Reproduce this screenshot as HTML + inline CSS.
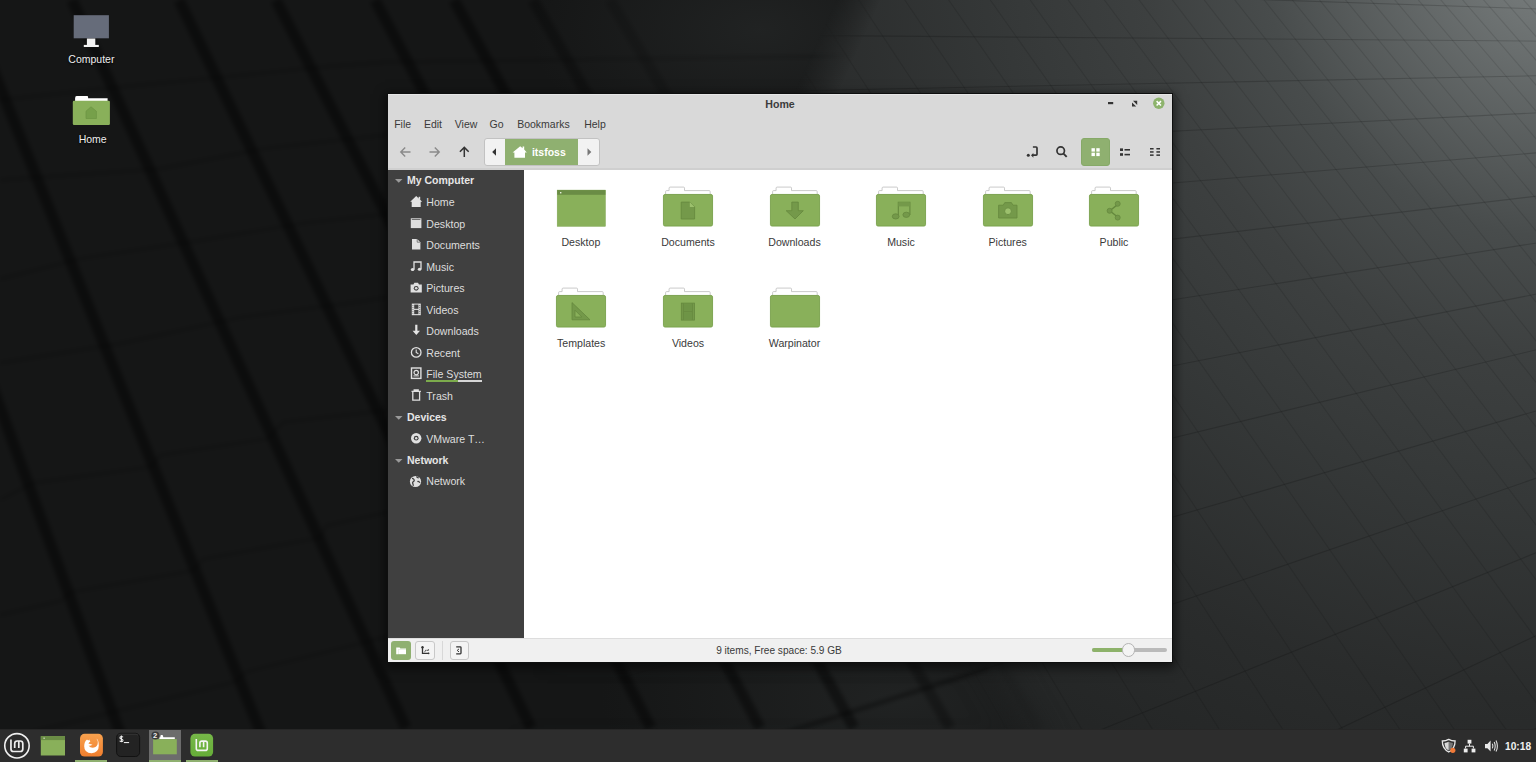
<!DOCTYPE html>
<html><head><meta charset="utf-8">
<style>
*{margin:0;padding:0;box-sizing:border-box}
html,body{width:1536px;height:762px;overflow:hidden;background:#151616;font-family:"Liberation Sans",sans-serif}
.a{position:absolute}
.t{position:absolute;line-height:1;white-space:nowrap}
svg{position:absolute;overflow:visible}
</style></head><body>
<svg style="left:0;top:0" width="1536" height="762" viewBox="0 0 1536 762">
<defs>
 <radialGradient id="litg" gradientUnits="userSpaceOnUse" cx="1560" cy="-60" r="1100">
  <stop offset="0" stop-color="#7c8181"/>
  <stop offset="0.06" stop-color="#737878"/>
  <stop offset="0.27" stop-color="#484c4c"/>
  <stop offset="0.38" stop-color="#3d4040"/>
  <stop offset="0.51" stop-color="#353838"/>
  <stop offset="0.69" stop-color="#2a2c2c"/>
  <stop offset="0.95" stop-color="#1f2121"/>
  <stop offset="1" stop-color="#1e2020"/>
 </radialGradient>
 <linearGradient id="mg" gradientUnits="userSpaceOnUse" x1="818.8" y1="38.7" x2="855.2" y2="55.3">
  <stop offset="0" stop-color="#000"/><stop offset="1" stop-color="#fff"/>
 </linearGradient>
 <filter id="bl" x="-10%" y="-10%" width="120%" height="120%"><feGaussianBlur stdDeviation="2.2"/></filter>
 <radialGradient id="haze"><stop offset="0" stop-color="#222424" stop-opacity="0.9"/><stop offset="1" stop-color="#222424" stop-opacity="0"/></radialGradient>
 <mask id="litm" maskUnits="userSpaceOnUse" x="0" y="0" width="1536" height="762">
  <rect width="1536" height="762" fill="url(#mg)"/>
  <path d="M0 640H980L1050 762H0Z" fill="#000" filter="url(#bl2)"/>
 </mask>
 <filter id="bl2" x="-20%" y="-20%" width="140%" height="140%"><feGaussianBlur stdDeviation="18"/></filter>
</defs>
<rect width="1536" height="762" fill="#151616"/>
<ellipse cx="760" cy="30" rx="230" ry="130" fill="url(#haze)"/>
<ellipse cx="900" cy="700" rx="300" ry="120" fill="url(#haze)"/>
<g filter="url(#bl)" stroke="#000" fill="none" stroke-linecap="butt">
 <g stroke-width="11" stroke-opacity="0.42">
  <path d="M-150 0L130.7 762"/>
  <path d="M-35 0L272.6 762"/>
  <path d="M72 0L406 728"/>
  <path d="M179 0L531 728"/>
  <path d="M276 0L650.8 728"/>
  <path d="M375 0L760 728"/>
  <path d="M454 0L854 728"/>
  <path d="M533 0L950 728" stroke-opacity="0.28"/>
  <path d="M610 0L1040 728" stroke-opacity="0.16"/>
 </g>
 <g stroke-width="4" stroke-opacity="0.4">
  <path d="M700 760L989 668"/>
  <path d="M1000 760L1180 701.7L1241 673.6"/>
  <path d="M1172 516.1L1241.4 498.1"/>
  <path d="M1172 604L1241.4 580.8"/>
 </g>
 <g stroke-width="1.3" stroke="#050606" stroke-opacity="0.4">
  <path d="M0 100L120 87L225 76.8L327.5 66.5L388 62L860 56"/>
  <path d="M0 180L158.6 169L266 148.4L358 138L388 135"/>
  <path d="M0 279L81.9 258.4L199.6 240.5L307 222.6L388 214"/>
  <path d="M0 363L123 343L240.5 317.3L358 302L388 297"/>
  <path d="M0 500L33 483L151 467L160.5 455L269 438.5L283 422L390 410"/>
  <path d="M0 615L61 601L70.8 592L193.6 570.7L203 559L321 537.6L325.8 525.8L390 511.6"/>
  <path d="M0 740L113 712L236 681.6L245.5 672L358.8 643.8L390 636"/>
 </g>
</g>
<rect width="1536" height="762" fill="url(#litg)" mask="url(#litm)"/>
<g mask="url(#litm)" stroke="#000" stroke-width="1.1" fill="none"><g stroke-opacity="0.17"><path d="M333.9 -199.5L1798.3 -49.2"/><path d="M-179.1 -188.8L1798.2 -28.3"/><path d="M-182.7 -121.5L1798.2 -6.0"/><path d="M-186.6 -49.4L1798.1 17.7"/><path d="M-190.7 27.8L1798.1 43.1"/><path d="M-195.2 110.9L1798.0 70.4"/><path d="M-199.9 200.4L1797.9 99.7"/><path d="M-172.2 294.5L1797.8 131.2"/><path d="M-176.4 398.1L1797.7 165.4"/><path d="M-180.9 510.9L1797.6 202.3"/><path d="M-185.8 633.9L1797.5 242.6"/><path d="M-191.3 768.7L1797.4 286.5"/><path d="M-197.2 917.0L1797.3 334.7"/><path d="M35.4 998.1L1797.2 387.8"/><path d="M463.6 988.9L1797.0 446.6"/><path d="M784.5 991.6L1796.9 512.0"/><path d="M1052.0 993.9L1796.7 585.2"/><path d="M1278.5 995.8L1796.5 667.7"/><path d="M1472.7 997.5L1796.2 761.4"/></g><g stroke-opacity="0.11"><path d="M-197.2 917.0L-179.5 990.2"/><path d="M-199.5 316.9L-5.8 996.6"/><path d="M-198.7 -86.7L150.0 988.7"/><path d="M-131.7 -197.7L298.2 994.7"/><path d="M-35.6 -195.6L430.8 987.5"/><path d="M51.3 -199.8L558.7 993.1"/><path d="M134.7 -197.8L678.2 998.3"/><path d="M212.6 -195.9L784.5 991.6"/><path d="M282.8 -199.6L889.3 996.6"/><path d="M351.3 -197.8L982.0 990.4"/><path d="M415.7 -196.0L1074.7 995.0"/><path d="M473.6 -199.4L1162.1 999.4"/><path d="M530.9 -197.8L1238.9 993.7"/><path d="M585.1 -196.2L1317.1 997.9"/><path d="M633.6 -199.3L1385.3 992.5"/><path d="M682.3 -197.8L1455.7 996.5"/><path d="M728.5 -196.3L1516.7 991.5"/><path d="M769.6 -199.2L1580.3 995.3"/><path d="M811.6 -197.8L1641.0 998.9"/><path d="M851.5 -196.4L1693.1 994.2"/><path d="M886.8 -199.1L1748.5 997.6"/><path d="M923.3 -197.8L1795.6 993.1"/><path d="M958.1 -196.5L1795.8 928.6"/><path d="M988.7 -199.0L1795.9 868.8"/><path d="M1020.7 -197.8L1796.1 813.3"/><path d="M1051.4 -196.6L1796.2 761.4"/><path d="M1078.2 -198.9L1796.3 713.0"/><path d="M1106.5 -197.8L1796.5 667.7"/><path d="M1133.8 -196.7L1796.6 625.2"/><path d="M1157.4 -198.9L1796.7 585.2"/><path d="M1182.6 -197.8L1796.8 547.5"/><path d="M1204.4 -199.9L1796.9 512.0"/><path d="M1230.5 -195.7L1796.9 478.4"/><path d="M1255.8 -191.7L1797.0 446.6"/><path d="M1280.3 -187.7L1797.1 416.4"/><path d="M1304.0 -184.0L1797.2 387.8"/><path d="M1326.9 -180.3L1797.2 360.6"/><path d="M1349.2 -176.7L1797.3 334.7"/><path d="M1370.7 -173.3L1797.4 310.1"/><path d="M1391.6 -169.9L1797.4 286.5"/><path d="M1411.9 -166.7L1797.5 264.1"/><path d="M1431.7 -163.5L1797.5 242.6"/><path d="M1450.8 -160.5L1797.6 222.0"/><path d="M1469.4 -157.5L1797.6 202.3"/><path d="M1487.5 -154.6L1797.7 183.5"/><path d="M1505.1 -151.8L1797.7 165.4"/><path d="M1522.2 -149.0L1797.8 148.0"/><path d="M1538.9 -146.4L1797.8 131.2"/><path d="M1555.1 -143.8L1797.9 115.2"/><path d="M1570.9 -141.2L1797.9 99.7"/><path d="M1586.3 -138.8L1797.9 84.8"/><path d="M1601.3 -136.4L1798.0 70.4"/><path d="M1616.0 -134.0L1798.0 56.5"/><path d="M1630.2 -131.8L1798.1 43.1"/><path d="M1644.2 -129.5L1798.1 30.2"/><path d="M1657.7 -127.4L1798.1 17.7"/><path d="M1671.0 -125.2L1798.1 5.7"/><path d="M1683.9 -123.2L1798.2 -6.0"/><path d="M1696.6 -121.1L1798.2 -17.3"/></g></g>
</svg>
<svg style="left:73px;top:15px" width="36" height="33" viewBox="0 0 36 33">
 <rect x="0.7" y="0.2" width="35.2" height="23.1" fill="#666c7a"/>
 <rect x="13.9" y="23.5" width="8.4" height="6.5" fill="#f2f2f2"/>
 <rect x="10.8" y="29.9" width="15" height="2.1" fill="#f2f2f2"/>
</svg>
<div class="t" style="left:-8.60px;top:53.81px;width:200px;text-align:center;font-size:10.5px;color:#eeeeee;text-shadow:0 1px 2px #000;">Computer</div>
<svg style="left:72px;top:95px" width="38" height="31" viewBox="0 0 38 31">
 <path d="M3.1 6V3.2Q3.1 1.2 4.6 1.1H15.2Q16.1 1.1 16.1 2.3V3.3H35.6V6Z" fill="#ffffff"/>
 <rect x="0.8" y="5.8" width="37.1" height="24.2" rx="1.2" fill="#89b05a"/>
 <path d="M14 23.5V16.2L19 11.8 24.4 16.2V23.5Z" fill="#76a04a" stroke="#6c9442" stroke-width="0.7"/>
</svg>
<div class="t" style="left:-7.30px;top:133.81px;width:200px;text-align:center;font-size:10.5px;color:#eeeeee;text-shadow:0 1px 2px #000;">Home</div>
<div class="a" style="left:387px;top:93px;width:786px;height:570px;box-shadow:0 3px 10px 2px rgba(0,0,0,.55);background:#0e0f0f"></div>
<div class="a" style="left:388px;top:94px;width:784px;height:76px;background:#d9d9d9;border-top:1px solid #e6e6e6"></div>
<div class="a" style="left:388px;top:168px;width:784px;height:2px;background:#cfcfcf"></div>
<div class="a" style="left:388px;top:170px;width:136px;height:468px;background:#404040"></div>
<div class="a" style="left:524px;top:170px;width:648px;height:468px;background:#ffffff"></div>
<div class="a" style="left:388px;top:638px;width:784px;height:24px;background:#f0f0f0;border-top:1px solid #dddddd"></div>
<div class="t" style="left:680.00px;top:98.93px;width:200px;text-align:center;font-size:10.6px;color:#3c3c3c;font-weight:bold;">Home</div>
<svg style="left:1100px;top:95px" width="72" height="18" viewBox="0 0 72 18">
 <rect x="8" y="7" width="5.2" height="2.2" fill="#333"/>
 <path d="M33 5.8H37.2V10Z M32 7.4V11.6H36.2Z" fill="#333"/>
 <circle cx="58.8" cy="8.3" r="5.7" fill="#8db36c"/>
 <path d="M56.6 6.1l4.4 4.4M61 6.1l-4.4 4.4" stroke="#fff" stroke-width="1.5"/>
</svg>
<div class="t " style="left:394.20px;top:119.01px;font-size:10.5px;color:#3a3a3a;">File</div>
<div class="t " style="left:423.90px;top:119.01px;font-size:10.5px;color:#3a3a3a;">Edit</div>
<div class="t " style="left:454.80px;top:119.01px;font-size:10.5px;color:#3a3a3a;">View</div>
<div class="t " style="left:489.60px;top:119.01px;font-size:10.5px;color:#3a3a3a;">Go</div>
<div class="t " style="left:517.20px;top:119.01px;font-size:10.5px;color:#3a3a3a;">Bookmarks</div>
<div class="t " style="left:584.20px;top:119.01px;font-size:10.5px;color:#3a3a3a;">Help</div>
<svg style="left:398px;top:145px" width="76" height="14" viewBox="0 0 76 14">
 <path d="M3 7h9.5M7.2 2.6L2.8 7l4.4 4.4" fill="none" stroke="#8a8a8a" stroke-width="1.4"/>
 <path d="M31.5 7h9.5M36.8 2.6L41.2 7l-4.4 4.4" fill="none" stroke="#8a8a8a" stroke-width="1.4"/>
 <path d="M66.3 12V2.6M61.9 6.8L66.3 2.4l4.4 4.4" fill="none" stroke="#333" stroke-width="1.5"/>
</svg>
<div class="a" style="left:483.8px;top:138.4px;width:115.8px;height:27.5px;border:1px solid #c2c2c2;border-radius:3px;background:#f2f2f2;overflow:hidden">
 <div class="a" style="left:20.5px;top:-1px;width:73px;height:27.5px;background:#8fb070"></div>
</div>
<svg style="left:484px;top:138px" width="116" height="28" viewBox="0 0 116 28">
 <path d="M12 10.2v7.6L8.2 14z" fill="#333"/>
 <path d="M103.5 10.2v7.6l3.8-3.8z" fill="#777"/>
 <path d="M30.4 19.8v-5.2h-1.8l7.6-6.3 2.4 2v-1.7h1.6v3l2.6 3h-1.8v5.2z" fill="#fff"/>
</svg>
<div class="t " style="left:531.90px;top:146.71px;font-size:10.5px;color:#ffffff;font-weight:bold;">itsfoss</div>
<div class="a" style="left:1081.2px;top:138.2px;width:28.7px;height:27.7px;background:#8fb070;border-radius:3px;border:1px solid #86a968"></div>
<svg style="left:1020px;top:140px" width="150" height="24" viewBox="0 0 150 24">
 <circle cx="8.3" cy="15.3" r="1.5" fill="#333"/>
 <path d="M12.9 7H16.1Q17 7 17 7.9V14.2Q17 15.1 16.1 15.1H12.6" fill="none" stroke="#333" stroke-width="1.7"/>
 <path d="M11 15.3L13.4 12.9V17.7Z" fill="#333"/>
 <circle cx="40.7" cy="10.7" r="3.75" fill="none" stroke="#333" stroke-width="1.7"/>
 <path d="M43.5 13.6L46.7 16.8" stroke="#333" stroke-width="1.9"/>
 <rect x="71.5" y="8.2" width="3.4" height="3.4" fill="#fff"/><rect x="76.3" y="8.2" width="3.4" height="3.4" fill="#fff"/>
 <rect x="71.5" y="12.7" width="3.4" height="3.4" fill="#fff"/><rect x="76.3" y="12.7" width="3.4" height="3.4" fill="#fff"/>
 <rect x="100" y="8.4" width="3" height="2.6" fill="#333"/><rect x="104.5" y="9" width="5.5" height="1.6" fill="#333"/>
 <rect x="100" y="13.2" width="3" height="2.6" fill="#333"/><rect x="104.5" y="13.8" width="5.5" height="1.6" fill="#333"/>
 <rect x="130" y="8" width="3.6" height="1.5" fill="#333"/><rect x="136.4" y="8" width="3.6" height="1.5" fill="#333"/>
 <rect x="130" y="11.2" width="3.6" height="1.5" fill="#333"/><rect x="136.4" y="11.2" width="3.6" height="1.5" fill="#333"/>
 <rect x="130" y="14.4" width="3.6" height="1.5" fill="#333"/><rect x="136.4" y="14.4" width="3.6" height="1.5" fill="#333"/>
</svg>
<svg style="left:394px;top:178.3px" width="10" height="6" viewBox="0 0 10 6"><path d="M1 1h7.5L4.75 4.8z" fill="#9a9a9a"/></svg>
<div class="t " style="left:407.00px;top:175.41px;font-size:10.5px;color:#e6e6e6;font-weight:bold;">My Computer</div>
<svg style="left:409.5px;top:195.4px" width="12.5" height="12.5" viewBox="0 0 12.5 12.5"><path d="M0.2 6.8L6.2 1L12.2 6.8H10.7V11.9H1.7V6.8Z" fill="#e4e4e4"/><rect x="8.6" y="1.8" width="1.6" height="3" fill="#e4e4e4"/></svg>
<div class="t " style="left:426.30px;top:197.03px;font-size:10.6px;color:#dedede;">Home</div>
<svg style="left:409.5px;top:216.9px" width="12.5" height="12.5" viewBox="0 0 12.5 12.5"><rect x="0.8" y="1.3" width="10.6" height="9.8" fill="#dedede"/><rect x="1.8" y="2.2" width="8.6" height="0.8" fill="#555"/></svg>
<div class="t " style="left:426.30px;top:218.53px;font-size:10.6px;color:#dedede;">Desktop</div>
<svg style="left:409.5px;top:238.4px" width="12.5" height="12.5" viewBox="0 0 12.5 12.5"><path d="M2 1h5.2l3.2 3.2V11.5H2z" fill="#e0e0e0"/><path d="M7.2 1v3.2h3.2" fill="none" stroke="#404040" stroke-width="0.6"/></svg>
<div class="t " style="left:426.30px;top:240.03px;font-size:10.6px;color:#dedede;">Documents</div>
<svg style="left:409.5px;top:259.9px" width="12.5" height="12.5" viewBox="0 0 12.5 12.5"><path d="M4 9.5V2h7v7" fill="none" stroke="#e0e0e0" stroke-width="1.3"/><ellipse cx="2.6" cy="9.6" rx="1.8" ry="1.5" fill="#e0e0e0"/><ellipse cx="9.6" cy="9.2" rx="1.8" ry="1.5" fill="#e0e0e0"/></svg>
<div class="t " style="left:426.30px;top:261.53px;font-size:10.6px;color:#dedede;">Music</div>
<svg style="left:409.5px;top:281.4px" width="12.5" height="12.5" viewBox="0 0 12.5 12.5"><path d="M0.6 3.4h2.8l1-1.6h3.6l1 1.6h2.8v8H0.6z" fill="#e0e0e0"/><circle cx="6.2" cy="7.3" r="2.4" fill="#404040"/><circle cx="6.2" cy="7.3" r="1.3" fill="#e0e0e0"/></svg>
<div class="t " style="left:426.30px;top:283.03px;font-size:10.6px;color:#dedede;">Pictures</div>
<svg style="left:409.5px;top:302.9px" width="12.5" height="12.5" viewBox="0 0 12.5 12.5"><rect x="1.8" y="0.6" width="9" height="11.6" fill="#e0e0e0"/><rect x="4.2" y="1.6" width="4.2" height="4.2" fill="#404040"/><rect x="4.2" y="6.9" width="4.2" height="4.2" fill="#404040"/><path d="M2.9 2.2v8.6M9.7 2.2v8.6" stroke="#404040" stroke-width="0.8" stroke-dasharray="0.9 1.1"/></svg>
<div class="t " style="left:426.30px;top:304.53px;font-size:10.6px;color:#dedede;">Videos</div>
<svg style="left:409.5px;top:324.4px" width="12.5" height="12.5" viewBox="0 0 12.5 12.5"><path d="M5.2 0.8h2.2v6h2.6L6.3 11 2.6 6.8h2.6z" fill="#e4e4e4"/></svg>
<div class="t " style="left:426.30px;top:326.03px;font-size:10.6px;color:#dedede;">Downloads</div>
<svg style="left:409.5px;top:345.9px" width="12.5" height="12.5" viewBox="0 0 12.5 12.5"><circle cx="6.2" cy="6.4" r="4.8" fill="none" stroke="#e0e0e0" stroke-width="1.3"/><path d="M6.2 3.6v2.8l2.2 1.4" fill="none" stroke="#e0e0e0" stroke-width="1.1"/></svg>
<div class="t " style="left:426.30px;top:347.53px;font-size:10.6px;color:#dedede;">Recent</div>
<svg style="left:409.5px;top:367.4px" width="12.5" height="12.5" viewBox="0 0 12.5 12.5"><rect x="1.5" y="1" width="9.4" height="10.4" fill="none" stroke="#e0e0e0" stroke-width="1.4"/><circle cx="6.2" cy="5.6" r="2.2" fill="none" stroke="#e0e0e0" stroke-width="1.2"/><rect x="3.4" y="8.4" width="5.5" height="1" fill="#e0e0e0"/></svg>
<div class="t " style="left:426.30px;top:369.03px;font-size:10.6px;color:#dedede;">File System</div>
<svg style="left:409.5px;top:388.9px" width="12.5" height="12.5" viewBox="0 0 12.5 12.5"><path d="M1.5 2.4h9.4M4.2 2.4V1h4v1.4M2.8 3v8.2h6.8V3" fill="none" stroke="#e0e0e0" stroke-width="1.3"/></svg>
<div class="t " style="left:426.30px;top:390.53px;font-size:10.6px;color:#dedede;">Trash</div>
<div class="a" style="left:426.3px;top:380.4px;width:31.9px;height:1.3px;background:#7cab4c"></div>
<div class="a" style="left:458.2px;top:380.4px;width:23.7px;height:1.3px;background:#d6d6d6"></div>
<svg style="left:394px;top:415.1px" width="10" height="6" viewBox="0 0 10 6"><path d="M1 1h7.5L4.75 4.8z" fill="#9a9a9a"/></svg>
<div class="t " style="left:407.00px;top:412.21px;font-size:10.5px;color:#e6e6e6;font-weight:bold;">Devices</div>
<svg style="left:409.5px;top:431.8px" width="12.5" height="12.5" viewBox="0 0 12.5 12.5"><circle cx="6.2" cy="6.2" r="5.2" fill="#e0e0e0"/><circle cx="6.2" cy="6.2" r="2.4" fill="#404040"/><circle cx="6.2" cy="6.2" r="1.2" fill="#e0e0e0"/></svg>
<div class="t " style="left:426.30px;top:433.53px;font-size:10.6px;color:#dedede;">VMware T…</div>
<svg style="left:394px;top:457.8px" width="10" height="6" viewBox="0 0 10 6"><path d="M1 1h7.5L4.75 4.8z" fill="#9a9a9a"/></svg>
<div class="t " style="left:407.00px;top:454.91px;font-size:10.5px;color:#e6e6e6;font-weight:bold;">Network</div>
<svg style="left:409px;top:474.6px" width="13" height="13" viewBox="0 0 13 13"><circle cx="6.5" cy="6.5" r="5.6" fill="#e0e0e0"/><path d="M3 3.4c1.4 0.2 2.4 1 2.2 2.2-0.2 1-1.6 0.8-1.6 2.2 0 1 .8 1.4.6 3M7.6 1.4c.2 1.2 1.2 1.4 2.2 1.4M8.4 6.6c.8-.4 2 0 2.4 1.2" fill="none" stroke="#404040" stroke-width="1.3"/></svg>
<div class="t " style="left:426.30px;top:476.23px;font-size:10.6px;color:#dedede;">Network</div>
<svg width="0" height="0" style="position:absolute">
<defs>
 <g id="fold">
  <path d="M2.6 7.6V4.6Q2.6 3.6 3.6 3.6H6.1V1.1Q6.1 0.1 7.1 0.1H20.5Q21.5 0.1 21.5 1.1V3.6H46.2Q47.2 3.6 47.2 4.6V7.6Z" fill="#ffffff" stroke="#c4c4c4" stroke-width="0.9"/>
  <rect x="0.45" y="7.45" width="49.1" height="31.6" rx="1.6" fill="#89b05a" stroke="#78a04b" stroke-width="0.9"/>
 </g>
</defs></svg>
<svg style="left:556.5px;top:190.2px" width="49" height="37" viewBox="0 0 49 37">
 <rect x="0.2" y="0.1" width="48.2" height="36.2" fill="#89b05a" stroke="#7da44f" stroke-width="0.5"/>
 <rect x="0.2" y="0.1" width="48.2" height="4.7" fill="#6a8c45"/>
 <rect x="3" y="2" width="1.4" height="1.4" fill="#e8f0dc"/>
</svg>
<div class="t" style="left:530.90px;top:236.63px;width:100px;text-align:center;font-size:10.6px;color:#3a3a3a;">Desktop</div>
<svg style="left:663.0px;top:187.0px" width="50" height="40" viewBox="0 0 50 40"><use href="#fold"/><path d="M18.2 15.1h8.6l4.8 4.8V32H18.2z" fill="#74994a" stroke="#64883d" stroke-width="0.8"/><path d="M26.8 15.1v4.8h4.8z" fill="#9cc06d"/></svg>
<div class="t" style="left:638.00px;top:236.63px;width:100px;text-align:center;font-size:10.6px;color:#3a3a3a;">Documents</div>
<svg style="left:769.5px;top:187.0px" width="50" height="40" viewBox="0 0 50 40"><use href="#fold"/><path d="M21.8 15.1h6.5v8.6h5L25 32l-8.8-8.3h5.6z" fill="#74994a" stroke="#64883d" stroke-width="0.8"/></svg>
<div class="t" style="left:744.50px;top:236.63px;width:100px;text-align:center;font-size:10.6px;color:#3a3a3a;">Downloads</div>
<svg style="left:876.0px;top:187.0px" width="50" height="40" viewBox="0 0 50 40"><use href="#fold"/><path d="M22.3 29.5V15.2h11.6v12.8" fill="none" stroke="#64883d" stroke-width="1.1"/><rect x="22.3" y="15.2" width="11.6" height="4.2" fill="#74994a"/><ellipse cx="19.7" cy="29.4" rx="3.4" ry="2.6" fill="#74994a" stroke="#64883d" stroke-width="0.8"/><ellipse cx="30.3" cy="27.8" rx="3.4" ry="2.6" fill="#74994a" stroke="#64883d" stroke-width="0.8"/></svg>
<div class="t" style="left:851.00px;top:236.63px;width:100px;text-align:center;font-size:10.6px;color:#3a3a3a;">Music</div>
<svg style="left:982.7px;top:187.0px" width="50" height="40" viewBox="0 0 50 40"><use href="#fold"/><path d="M15.6 18.2h4.6l1.6-2.6h6.6l1.6 2.6h4v12.8H15.6z" fill="#74994a" stroke="#64883d" stroke-width="0.8"/><circle cx="25" cy="24.2" r="3.4" fill="#9cc06d" stroke="#64883d" stroke-width="0.8"/></svg>
<div class="t" style="left:957.70px;top:236.63px;width:100px;text-align:center;font-size:10.6px;color:#3a3a3a;">Pictures</div>
<svg style="left:1089.0px;top:187.0px" width="50" height="40" viewBox="0 0 50 40"><use href="#fold"/><path d="M28.6 17.6L20.8 23.8 28.6 30" fill="none" stroke="#64883d" stroke-width="1.4"/><circle cx="28.7" cy="16.8" r="2.5" fill="#74994a" stroke="#64883d" stroke-width="0.8"/><circle cx="20.6" cy="23.8" r="2.5" fill="#74994a" stroke="#64883d" stroke-width="0.8"/><circle cx="28.7" cy="30.6" r="2.5" fill="#74994a" stroke="#64883d" stroke-width="0.8"/></svg>
<div class="t" style="left:1064.00px;top:236.63px;width:100px;text-align:center;font-size:10.6px;color:#3a3a3a;">Public</div>
<svg style="left:556.2px;top:288.2px" width="50" height="40" viewBox="0 0 50 40"><use href="#fold"/><path d="M16 14.6V31.8H34z" fill="#74994a" stroke="#64883d" stroke-width="0.8"/><path d="M19 22.2V29h6.8z" fill="#89b05a" stroke="#64883d" stroke-width="0.8"/></svg>
<div class="t" style="left:531.20px;top:337.63px;width:100px;text-align:center;font-size:10.6px;color:#3a3a3a;">Templates</div>
<svg style="left:663.0px;top:288.2px" width="50" height="40" viewBox="0 0 50 40"><use href="#fold"/><rect x="18.3" y="15.1" width="13.2" height="17" fill="#74994a" stroke="#64883d" stroke-width="0.8"/><path d="M20.4 15.5v16.4M29.4 15.5v16.4M21 23.6h8" stroke="#64883d" stroke-width="0.8"/><rect x="21" y="16.2" width="8" height="6.6" fill="#6e9446"/><rect x="21" y="24.4" width="8" height="6.6" fill="#6e9446"/></svg>
<div class="t" style="left:638.00px;top:337.63px;width:100px;text-align:center;font-size:10.6px;color:#3a3a3a;">Videos</div>
<svg style="left:769.5px;top:288.2px" width="50" height="40" viewBox="0 0 50 40"><use href="#fold"/></svg>
<div class="t" style="left:744.50px;top:337.63px;width:100px;text-align:center;font-size:10.6px;color:#3a3a3a;">Warpinator</div>
<div class="a" style="left:391.2px;top:641.4px;width:19.8px;height:18.3px;background:#8fb070;border-radius:3px"></div>
<div class="a" style="left:415.3px;top:641.4px;width:19.8px;height:18.3px;background:#f4f4f4;border:1px solid #c8c8c8;border-radius:3px"></div>
<div class="a" style="left:442.2px;top:641.4px;width:1px;height:18.3px;background:#d8d8d8"></div>
<div class="a" style="left:449.6px;top:641.4px;width:19.8px;height:18.3px;background:#f4f4f4;border:1px solid #c8c8c8;border-radius:3px"></div>
<svg style="left:390px;top:640px" width="80" height="20" viewBox="0 0 80 20">
 <path d="M6.2 14.2V7.4h3.4l0.8 1h5.6v1H8.2v4.8z" fill="#fff"/><rect x="8.2" y="9.4" width="7.8" height="4.8" fill="#fff"/>
 <path d="M32.5 7.2v6.2h6.4" fill="none" stroke="#333" stroke-width="1.3"/><circle cx="32.5" cy="7.2" r="1.2" fill="#333"/>
 <path d="M34.6 12.2l1.2-2.4M36.4 10.4h1.6" fill="none" stroke="#555" stroke-width="0.9"/><circle cx="38.4" cy="9.9" r="0.7" fill="#333"/><circle cx="38.6" cy="13.3" r="0.9" fill="#333"/>
 <path d="M66.2 6.8H70.2Q71 6.8 71 7.6V13Q71 13.8 70.2 13.8H66.2" fill="none" stroke="#333" stroke-width="1.3"/><path d="M69 8.9L67.2 10.4 69 11.9" fill="none" stroke="#333" stroke-width="1"/>
</svg>
<div class="t" style="left:669.00px;top:646.05px;width:220px;text-align:center;font-size:10.1px;color:#3a3a3a;">9 items, Free space: 5.9 GB</div>
<div class="a" style="left:1091.5px;top:648.2px;width:75.3px;height:4px;background:#bababa;border-radius:2px"></div>
<div class="a" style="left:1091.5px;top:648.2px;width:36px;height:4px;background:#8db26a;border-radius:2px 0 0 2px"></div>
<div class="a" style="left:1122.2px;top:643.4px;width:13.2px;height:13.2px;background:#f4f4f4;border:1px solid #b4b4b4;border-radius:50%"></div>
<div class="a" style="left:0;top:729.4px;width:1536px;height:33px;background:#2d2d2d;border-top:1px solid #262626"></div>
<div class="a" style="left:149.1px;top:729.9px;width:32.1px;height:32.1px;background:#6c6c6c"></div>
<div class="a" style="left:75px;top:760px;width:32.4px;height:2px;background:#8fb070"></div>
<div class="a" style="left:149.1px;top:760px;width:32.1px;height:2px;background:#8fb070"></div>
<div class="a" style="left:185.9px;top:760px;width:32.0px;height:2px;background:#8fb070"></div>
<svg style="left:0;top:729px" width="230" height="33" viewBox="0 0 230 33">
 <defs>
  <linearGradient id="ffg" x1="0" y1="0" x2="0" y2="1"><stop offset="0" stop-color="#f8a24e"/><stop offset="1" stop-color="#f07e2e"/></linearGradient>
  <linearGradient id="mtg" x1="0" y1="0" x2="0" y2="1"><stop offset="0" stop-color="#76b848"/><stop offset="1" stop-color="#66ad38"/></linearGradient>
 </defs>
 <circle cx="16.96" cy="16.8" r="12.2" fill="none" stroke="#f0f0f0" stroke-width="1.6"/>
 <path d="M10.95 10.5V20Q10.95 22.5 13.45 22.5H20.3Q22.8 22.5 22.8 20V14.5Q22.8 12 20.3 12H17.2Q14.7 12 14.7 14.5V18.9M18.8 12.2V18.9" fill="none" stroke="#eeeeee" stroke-width="1.7"/>
 <rect x="40.8" y="7.2" width="24.2" height="19.3" fill="#89b05a"/><rect x="40.8" y="7.2" width="24.2" height="3.9" fill="#6a8c45"/><rect x="43.5" y="8.6" width="1.2" height="1.2" fill="#e8f0dc"/>
 <rect x="80" y="4.8" width="22.9" height="22.7" rx="4.6" fill="url(#ffg)"/>
 <path d="M84.2 17.2Q84.2 12.6 87 10.4L88.2 11.6 89.4 10.6Q89.6 12 90.4 12.4 88.8 13.2 88.4 14.6 90.2 15.6 92.6 15.4 91 17 88.6 16.8 90.6 19.2 94 18.6 97.4 17.6 97.8 14 98 11.4 96.4 9.4 98.8 11 98.8 16.6 98.8 23.6 91.6 24.2 84.2 24 84.2 17.2Z" fill="#ffffff"/>
 <rect x="116.6" y="4.3" width="23" height="23.2" rx="4.2" fill="#232323" stroke="#121212" stroke-width="1"/><path d="M118.2 6.2Q119 5.2 121 5.2H135.2Q137.2 5.2 138 6.2" fill="none" stroke="#3c3c3c" stroke-width="0.8"/>
 <path d="M123 8.3Q122.6 7.5 121.4 7.5Q119.9 7.5 119.9 8.7Q119.9 9.7 121.4 10Q123 10.3 123 11.4Q123 12.6 121.4 12.6Q120.1 12.6 119.7 11.8M121.4 6.6V13.3" fill="none" stroke="#eeeeee" stroke-width="1.05"/>
 <rect x="123.9" y="13" width="5.2" height="1.1" fill="#e8e8e8"/>
 <path d="M159.4 10.2V8.6L160.2 8.2 160.8 6.1H162.6L163.4 8.2H174.8V10.2Z" fill="#fff"/>
 <rect x="153.1" y="10.2" width="23.7" height="15.1" fill="#89b05a"/>
 <circle cx="155.4" cy="6.4" r="4" fill="#3a3a3a"/>
 <text x="153.1" y="9.1" font-family="Liberation Sans" font-size="7.6" font-weight="bold" fill="#f0f0f0">2</text>
 <rect x="190.4" y="4.8" width="22.7" height="22.7" rx="4.6" fill="url(#mtg)"/>
 <path d="M196.3 10V19.4Q196.3 21.4 198.3 21.4H205.3Q207.3 21.4 207.3 19.4V14.1Q207.3 12.1 205.3 12.1H201.9Q199.9 12.1 199.9 14.1V18.2M203.6 12.3V18.2" fill="none" stroke="#f4f4f4" stroke-width="1.6"/>
</svg>
<svg style="left:1440px;top:737px" width="60" height="18" viewBox="0 0 60 18">
 <path d="M8.7 2.4q3 1.6 6.4 1.6 0 7.6-6.4 11-6.4-3.4-6.4-11 3.4 0 6.4-1.6z" fill="none" stroke="#e8e8e8" stroke-width="1.3"/>
 <path d="M8.7 4.8q2 .9 4.2 1.1 0 5.4-4.2 7.6z" fill="#777"/><path d="M8.7 4.8q-2 .9-4.2 1.1 0 5.4 4.2 7.6z" fill="#d8d8d8"/>
 <circle cx="12.8" cy="13.3" r="2.6" fill="#f07a38"/>
 <rect x="27.6" y="2.8" width="3.8" height="3.8" fill="#eee"/><path d="M29.5 6.6v2.6M25.6 11.4V9.2h7.8v2.2" fill="none" stroke="#eee" stroke-width="1"/>
 <rect x="23.8" y="11.6" width="3.8" height="3.8" fill="#eee"/><rect x="31.6" y="11.6" width="3.8" height="3.8" fill="#eee"/>
 <path d="M45 7h2.4l3.2-3.4v11l-3.2-3.4H45z" fill="#e8e8e8"/>
 <path d="M52.4 6.8q1 2.3 0 4.6M54.2 5q2 4.2 0 8.4M56 3.4q2.8 5.6 0 11.2" fill="none" stroke="#e0e0e0" stroke-width="1.1"/>
</svg>
<div class="t " style="left:1505.00px;top:742.17px;font-size:10.2px;color:#f0f0f0;font-weight:bold;">10:18</div>
</body></html>
